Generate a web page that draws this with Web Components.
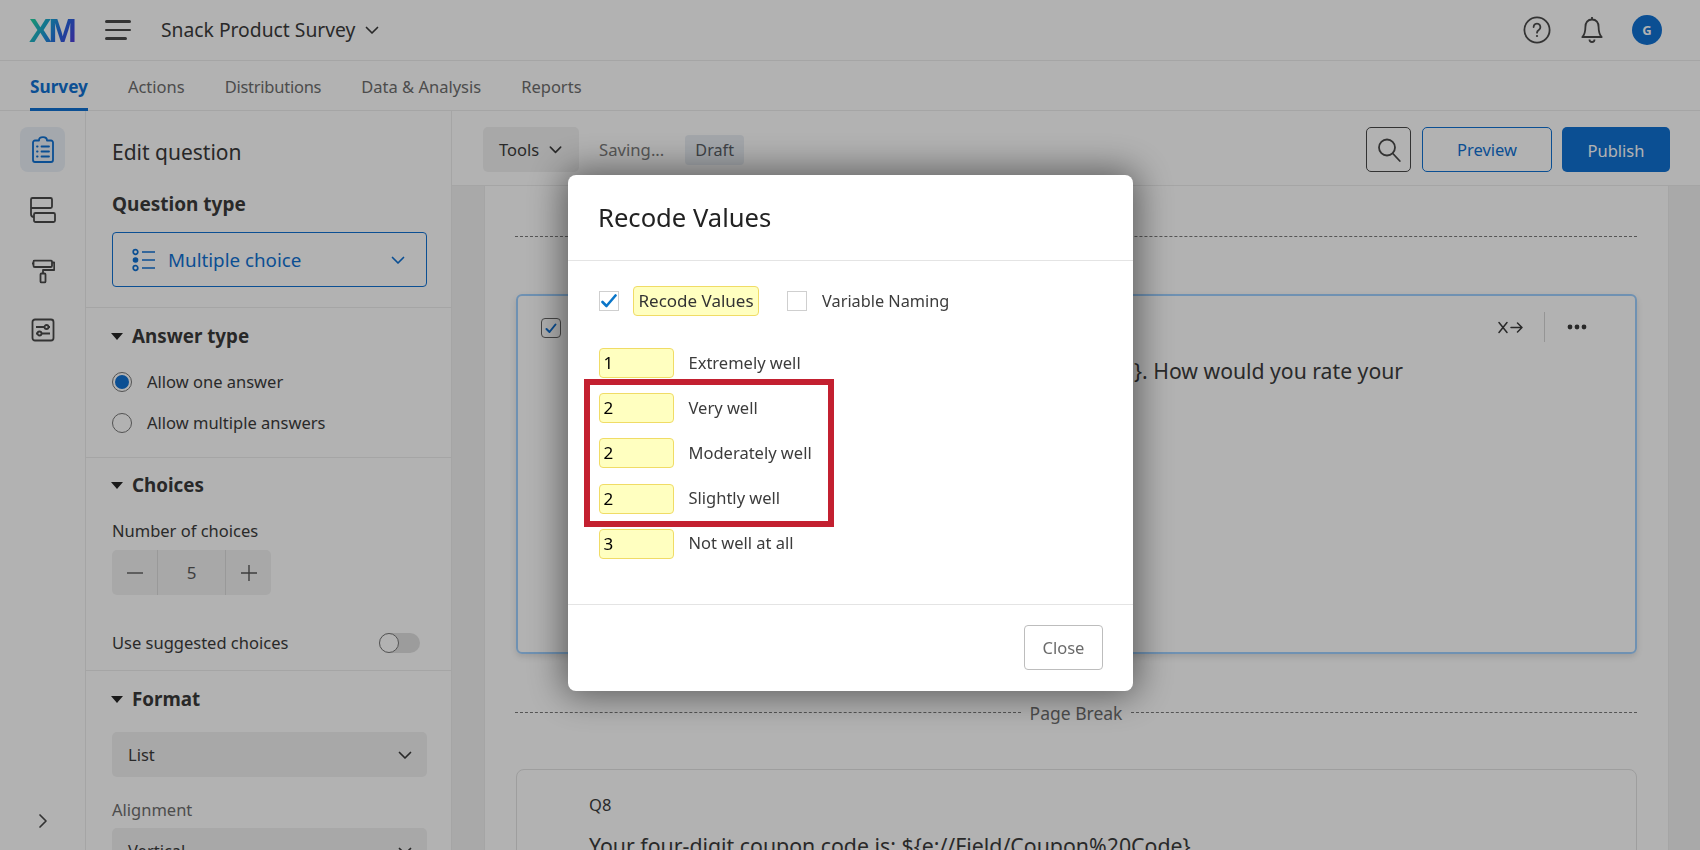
<!DOCTYPE html>
<html lang="en"><head><meta charset="utf-8"><title>Recode Values</title>
<style>
html,body{margin:0;height:850px;overflow:hidden;background:#fff}
body{font-family:"Noto Sans","Open Sans",sans-serif;color:#3c3c3c;font-size:16.5px}
app-shell{width:1700px;height:850px}
</style></head><body>
<app-shell>
  <qx-topbar slot="top" title="Snack Product Survey"></qx-topbar>
  <qx-tabs slot="tabs"></qx-tabs>
  <qx-rail slot="rail"></qx-rail>
  <qx-panel slot="panel"></qx-panel>
  <qx-toolbar slot="toolbar"></qx-toolbar>
  <qx-canvas slot="canvas"></qx-canvas>
</app-shell>
<qx-scrim></qx-scrim>
<qx-modal>
  <recode-row value="1">Extremely well</recode-row>
  <recode-row value="2">Very well</recode-row>
  <recode-row value="2">Moderately well</recode-row>
  <recode-row value="2">Slightly well</recode-row>
  <recode-row value="3">Not well at all</recode-row>
</qx-modal>
<script>
const def=(name,html,init)=>customElements.define(name,class extends HTMLElement{
  constructor(){super();this.attachShadow({mode:'open'}).innerHTML=typeof html==='function'?html(this):html;}
  connectedCallback(){ if(init) init(this,this.shadowRoot); }
});
const chev=(s=16,c='currentColor',w=1.7)=>`<svg width="${s}" height="${s}" viewBox="0 0 16 16" fill="none" stroke="${c}" stroke-width="${w}" stroke-linecap="round" stroke-linejoin="round"><path d="M2.5 5.5 8 11l5.5-5.5"/></svg>`;
const BLUE='#1071d3', INK='#3c3c3c', LINE='#ededed', FIELD='#f1f1f1';

def('app-shell',`<style>
:host{display:grid;grid-template-columns:86px 366px 1fr;grid-template-rows:61px 50px 75px 1fr;overflow:hidden}
::slotted([slot=top]),::slotted([slot=tabs]){grid-column:1/4}
::slotted([slot=rail]){grid-row:3/5;grid-column:1}
::slotted([slot=panel]){grid-row:3/5;grid-column:2}
::slotted([slot=toolbar]){grid-row:3;grid-column:3}
::slotted([slot=canvas]){grid-row:4;grid-column:3;min-height:0}
</style>
<slot name="top"></slot><slot name="tabs"></slot><slot name="rail"></slot><slot name="panel"></slot><slot name="toolbar"></slot><slot name="canvas"></slot>`);

def('qx-topbar',el=>`<style>
:host{display:flex;align-items:center;border-bottom:1px solid ${LINE};box-sizing:border-box;padding:0 38px 0 29px;color:${INK}}
.logo{font:700 34px/1 "Liberation Sans",sans-serif;letter-spacing:-3.2px;width:50px;height:30px;line-height:30px;background:linear-gradient(120deg,#24d8a0 5%,#1c9ad8 40%,#2a62e0 65%,#6030d8 100%);-webkit-background-clip:text;background-clip:text;color:transparent}
.burger{margin-left:26px;width:26px;display:flex;flex-direction:column;gap:6px}
.burger i{display:block;height:2.5px;background:#4a4a4a;border-radius:2px}
.burger i:last-child{width:22px}
.t{margin-left:30px;font-size:19.3px;color:${INK};padding-bottom:2px}
.c{margin-left:9px;display:flex}
.sp{flex:1}
.help{display:flex;margin-right:29px}.bell{display:flex;margin-right:28px}
.av{width:30px;height:30px;border-radius:50%;background:${BLUE};color:#fff;font:700 13px/30px "Noto Sans",sans-serif;text-align:center}
</style>
<div class="logo">XM</div>
<div class="burger"><i></i><i></i><i></i></div>
<div class="t">${el.getAttribute('title')}</div><div class="c">${chev(16,INK)}</div>
<div class="sp"></div>
<div class="help"><svg width="28" height="28" viewBox="0 0 28 28" fill="none" stroke="#4a4a4a" stroke-width="1.8"><circle cx="14" cy="14" r="12.6"/><path d="M10.6 11a3.4 3.4 0 1 1 5.2 2.9c-1.2.8-1.8 1.4-1.8 2.8" stroke-linecap="round"/><circle cx="14" cy="20" r="1.1" fill="#4a4a4a" stroke="none"/></svg></div>
<div class="bell"><svg width="24" height="28" viewBox="0 0 24 28" fill="none" stroke="#4a4a4a" stroke-width="1.8" stroke-linejoin="round"><path d="M12 3.5c-4.4 0-6.6 3.2-6.6 7.4 0 5.5-1.2 8-3.1 10.1h19.4c-1.9-2.1-3.1-4.6-3.1-10.1 0-4.2-2.2-7.4-6.6-7.4Z"/><path d="M12 1v2.5M9.5 23.5a2.5 2.5 0 0 0 5 0"/></svg></div>
<div class="av">G</div>`);

def('qx-tabs',`<style>
:host{display:flex;border-bottom:1px solid ${LINE};box-sizing:border-box;padding-left:30px;font-size:16.5px;color:#6e6e6e}
a{display:block;line-height:52px;height:49px;margin-right:40px;box-sizing:border-box}
a.on{color:${BLUE};font-weight:700;font-size:17.200px;border-bottom:3px solid ${BLUE};height:50px;margin-bottom:-1px}
.d{letter-spacing:-.25px}
</style><a class="on">Survey</a><a>Actions</a><a class="d">Distributions</a><a>Data &amp; Analysis</a><a>Reports</a>`);

def('qx-rail',`<style>
:host{display:flex;flex-direction:column;align-items:center;border-right:1px solid ${LINE};box-sizing:border-box;padding-top:16px;position:relative}
.b{width:45px;height:45px;border-radius:8px;display:flex;align-items:center;justify-content:center;margin-bottom:15px;color:#4a4a4a}
.on{background:#ebf1f8;color:${BLUE}}
.x{margin-top:auto;margin-bottom:21px;display:flex;color:#4a4a4a}
</style>
<div class="b on"><svg width="24" height="28" viewBox="0 0 24 28" fill="none" stroke="currentColor" stroke-width="1.8" stroke-linejoin="round" stroke-linecap="round"><path d="M8 4.5H4a2 2 0 0 0-2 2V24a2 2 0 0 0 2 2h16a2 2 0 0 0 2-2V6.500a2 2 0 0 0-2-2h-4c0-2-1.800-3.300-4-3.300S8 2.500 8 4.500Z"/><path d="M10.500 10.500H18M10.500 15.500H18M10.500 20.500H18M6 10.500h.6M6 15.500h.6M6 20.500h.6"/></svg></div>
<div class="b"><svg width="26" height="28" viewBox="0 0 26 28" fill="none" stroke="currentColor" stroke-width="1.800" stroke-linejoin="round"><path d="M1 3.500A1.500 1.500 0 0 1 2.500 2H20.500A1.500 1.500 0 0 1 22 3.500V10.500A1.500 1.500 0 0 1 20.500 12H1M1 3.500V18c0 1.800 1 3 3 3"/><rect x="4" y="17" width="21" height="9" rx="1.500"/></svg></div>
<div class="b"><svg width="24" height="24" viewBox="0 0 24 24" fill="none" stroke="currentColor" stroke-width="1.800" stroke-linejoin="round" style="transform:translateY(1.500px)"><rect x="2.500" y="1" width="18.500" height="6.500" rx="1.300"/><path d="M2.500 4H1M21 3h2.200v7.500H12V14"/><rect x="9.500" y="14" width="5" height="9" rx="1"/></svg></div>
<div class="b"><svg width="24" height="24" viewBox="0 0 24 24" fill="none" stroke="currentColor" stroke-width="1.8"><rect x="1.500" y="1.500" width="21" height="21" rx="2.500"/><path d="M5 9h8.500M17.500 9H19M5 15.500h1.500M10.500 15.500H19"/><circle cx="15.500" cy="9" r="2"/><circle cx="8.500" cy="15.500" r="2"/></svg></div>
<div class="x"><svg width="14" height="16" viewBox="0 0 14 16" fill="none" stroke="currentColor" stroke-width="1.700" stroke-linecap="round" stroke-linejoin="round"><path d="M4 2l6 6-6 6"/></svg></div>`);

const tri=`<svg width="12" height="7" viewBox="0 0 12 7"><path d="M0 0h12L6 7Z" fill="#262626"/></svg>`;
def('qx-panel',`<style>
:host{display:block;border-right:1px solid ${LINE};box-sizing:border-box;overflow:hidden;color:${INK}}
section{padding:0 24px 0 26px;border-bottom:1px solid ${LINE}}
section:last-child{border:0}
h1{margin:0;font-weight:400;font-size:21px;line-height:28px;color:#3a3a3a}
h2{margin:0;font-weight:700;font-size:18.800px;line-height:24px;display:flex;align-items:center;gap:9px;margin-left:-1px;color:#3a3a3a}
.qt{margin-top:26px;font-weight:700;font-size:19px;line-height:24px}
.sel{margin-top:16px;height:55px;border:1.500px solid ${BLUE};border-radius:4px;box-sizing:border-box;display:flex;align-items:center;padding:0 20px 0 19px;color:${BLUE};font-size:18.800px}
.sel span{margin-left:12px;flex:1}
.r{height:41px;display:flex;align-items:center;gap:15px;font-size:16.500px}
.dot{width:20px;height:20px;border-radius:50%;border:1px solid #777;box-sizing:border-box;background:#fff;display:flex;align-items:center;justify-content:center}
.dot i{width:14px;height:14px;border-radius:50%;background:${BLUE}}
.lab{font-size:16.500px;line-height:22px}
.st{display:flex;width:159px;height:45px;background:${FIELD};border-radius:5px;margin-top:8px;align-items:center;color:#5a5a5a}
.st div{display:flex;align-items:center;justify-content:center;height:100%}
.st .n{width:69px;border-left:1.500px solid #dcdcdc;border-right:1.500px solid #dcdcdc;box-sizing:border-box;font-size:17px}
.st .m{width:45px}.st .p{width:45px}
.row{display:flex;justify-content:space-between;align-items:center;margin-top:37px;height:22px}
.tg{width:41px;height:20px;border-radius:10px;background:#e0e0e0;position:relative;margin-right:7px}
.tg i{position:absolute;left:0;top:0;width:20px;height:20px;border-radius:50%;background:#fff;border:1px solid #777;box-sizing:border-box}
.f{height:45px;background:${FIELD};border-radius:5px;display:flex;align-items:center;justify-content:space-between;padding:0 14px 0 16px;font-size:16.500px}
</style>
<section style="padding-top:27px;height:197px;box-sizing:border-box">
  <h1>Edit question</h1>
  <div class="qt">Question type</div>
  <div class="sel"><svg width="24" height="24" viewBox="0 0 24 24" fill="none" stroke="currentColor" stroke-width="1.700"><circle cx="3.500" cy="4" r="2.300"/><circle cx="3.500" cy="12" r="2.800" fill="currentColor" stroke="none"/><circle cx="3.500" cy="20" r="2.300"/><path d="M10 4h13M10 12h13M10 20h13"/></svg><span>Multiple choice</span>${chev(16,BLUE)}</div>
</section>
<section style="padding-top:16px;height:150px;box-sizing:border-box">
  <h2>${tri}Answer type</h2>
  <div class="r" style="margin-top:13px"><div class="dot"><i></i></div>Allow one answer</div>
  <div class="r"><div class="dot"></div>Allow multiple answers</div>
</section>
<section style="padding-top:15px;height:213px;box-sizing:border-box">
  <h2>${tri}Choices</h2>
  <div class="lab" style="margin-top:23px">Number of choices</div>
  <div class="st"><div class="m"><svg width="16" height="2" viewBox="0 0 16 2"><path d="M0 1h16" stroke="#5a5a5a" stroke-width="1.400"/></svg></div><div class="n">5</div><div class="p"><svg width="16" height="16" viewBox="0 0 16 16"><path d="M0 8h16M8 0v16" stroke="#5a5a5a" stroke-width="1.400"/></svg></div></div>
  <div class="row lab"><span>Use suggested choices</span><div class="tg"><i></i></div></div>
</section>
<section style="padding-top:16px">
  <h2>${tri}Format</h2>
  <div class="f" style="margin-top:21px">List${chev(16,INK)}</div>
  <div class="lab" style="margin-top:22px;color:#6e6e6e">Alignment</div>
  <div class="f" style="margin-top:7px">Vertical${chev(16,INK)}</div>
</section>`);

def('qx-toolbar',`<style>
:host{display:flex;align-items:flex-start;border-bottom:1px solid ${LINE};box-sizing:border-box;padding:16px 30px 0 31px;font-size:16.500px}
.tools{height:45px;width:96px;background:${FIELD};border-radius:5px;display:flex;align-items:center;justify-content:center;gap:9px;color:${INK}}
.sv{margin-left:20px;line-height:45px;color:#7c7c7c;font-size:16.700px}
.dr{margin-left:21px;margin-top:8px;height:30px;line-height:30px;padding:0 10px;background:#e9eef4;border-radius:4px;color:#5a5f66;font-size:16.200px}
.sp{flex:1}
.s{width:45px;height:45px;border:1.500px solid #4a4a4a;border-radius:5px;box-sizing:border-box;display:flex;align-items:center;justify-content:center}
.pv{margin-left:11px;width:130px;height:45px;border:1.500px solid ${BLUE};border-radius:5px;box-sizing:border-box;color:${BLUE};display:flex;align-items:center;justify-content:center}
.pb{margin-left:10px;width:108px;height:45px;background:${BLUE};border-radius:5px;color:#fff;display:flex;align-items:center;justify-content:center;padding-top:2px;box-sizing:border-box}
</style>
<div class="tools">Tools${chev(15,INK)}</div><div class="sv">Saving...</div><div class="dr">Draft</div><div class="sp"></div>
<div class="s"><svg width="24" height="26" viewBox="0 0 24 26" fill="none" stroke="#4a4a4a" stroke-width="1.800" stroke-linecap="round"><circle cx="10" cy="10.500" r="8"/><path d="m15.800 16.500 7 7.500"/></svg></div>
<div class="pv">Preview</div><div class="pb">Publish</div>`);

def('page-break',el=>`<style>
:host{display:flex;align-items:center;gap:9px;height:1px;font-size:17.500px;color:#6e6e6e}
i{flex:1;border-top:1.200px dashed #7a7a7a}
</style><i></i>${el.hasAttribute('label')?`<span>${el.getAttribute('label')}</span><i></i>`:''}`);

def('qx-canvas',`<style>
:host{display:block;background:#f2f2f2;padding:0 31px 0 32px;overflow:hidden}
.col{background:#fff;border:solid ${LINE};border-width:0 1px;height:100%;padding:50px 31px 0 30px;box-sizing:content-box;overflow:hidden}
.card{margin:57px 0 0 1px;height:360px;box-sizing:border-box;border:2px solid #9fd0ff;border-radius:6px;box-shadow:0 3px 6px rgba(0,0,0,.12);padding:21px 48px 0 23px;font-size:21.200px}
.hd{display:flex;align-items:center;height:22px}
.ck{width:20px;height:20px;border:1.200px solid #666;border-radius:4px;box-sizing:border-box;display:flex;align-items:center;justify-content:center;background:#fff}
.sp{flex:1}
.ic{display:flex;align-items:center;margin-top:-2px}
.sep{height:30px;width:1px;background:#d6d6d6;margin:0 22px 0 20px}
.q{margin:18px 0 0 593px;line-height:28px;white-space:nowrap;color:#3c3c3c}
.c2{margin:56px 0 0 1px;height:200px;box-sizing:border-box;border:1px solid #e2e2e2;border-radius:8px;padding:23px 0 0 72px}
.c2 .n{font-size:16.500px;line-height:24px;color:#3c3c3c}
.c2 .t{font-size:21.300px;line-height:28px;margin-top:15px;color:#3c3c3c;white-space:nowrap}
</style>
<div class="col">
  <page-break></page-break>
  <div class="card">
    <div class="hd"><div class="ck"><svg width="12" height="11" viewBox="0 0 12 11" fill="none" stroke="${BLUE}" stroke-width="2" stroke-linecap="round" stroke-linejoin="round"><path d="M1.500 6 4.500 9 10.500 1.500"/></svg></div><div class="sp"></div>
      <div class="ic"><svg width="26" height="14" viewBox="0 0 26 14" fill="none" stroke="#3c3c3c" stroke-width="1.500" stroke-linecap="round" stroke-linejoin="round"><path d="M1 2.500 9 12.500M9 2.500 1 12.500M13 7.500h11M19.500 3l4.500 4.500-4.500 4.500"/></svg>
      <div class="sep"></div>
      <svg width="20" height="6" viewBox="0 0 20 6" fill="#3c3c3c"><circle cx="3" cy="3" r="2.400"/><circle cx="10" cy="3" r="2.400"/><circle cx="17" cy="3" r="2.400"/></svg></div></div>
    <div class="q">}. How would you rate your</div>
  </div>
  <div style="height:58px"></div>
  <page-break label="Page Break"></page-break>
  <div class="c2"><div class="n">Q8</div><div class="t">Your four-digit coupon code is: \${e://Field/Coupon%20Code}</div></div>
</div>`);

def('qx-scrim',`<style>:host{position:fixed;inset:0;background:rgba(0,0,0,.3);display:block}</style>`);

def('recode-row',el=>`<style>
:host{display:flex;align-items:center;height:30px;font-size:16.500px;color:#3c3c3c}
.i{width:75px;height:30px;box-sizing:border-box;background:#ffffc0;border:1.500px solid #f0dc66;border-radius:4px;color:#000;line-height:27px;padding-left:4px;font-size:17px;margin-right:15px}
.l{padding-bottom:2px}
</style><div class="i">${el.getAttribute('value')}</div><div class="l"><slot></slot></div>`);

def('qx-modal',`<style>
:host{position:fixed;left:568px;top:175px;width:565px;height:516px;background:#fff;border-radius:8px;box-shadow:0 0 36px 4px rgba(0,0,0,.5);display:flex;flex-direction:column;color:#303030}
header{height:86px;box-sizing:border-box;border-bottom:1px solid #e4e4e4;padding:0 30px;display:flex;align-items:center;font-size:25.600px;color:#222}
main{flex:1;padding:25px 30px 0 30.500px}
.top{display:flex;align-items:center;height:30px;font-size:16.500px}
.cb{width:20px;height:20px;border:1.500px solid #cfcfcf;box-sizing:border-box;background:#fff;display:flex;align-items:center;justify-content:center}
.hl{margin-left:14.500px;height:30px;line-height:27px;box-sizing:border-box;padding:0 4.500px;background:#ffffc0;border:1.500px solid #f0dc66;border-radius:4px;color:#333;font-size:17px}
.vn{margin-left:15px;color:#3c3c3c;font-size:16.300px}
.rows{margin-top:32px;display:flex;flex-direction:column;gap:15.200px}
footer{height:87px;box-sizing:border-box;border-top:1px solid #e4e4e4;display:flex;justify-content:flex-end;align-items:flex-start;padding:20px 30px 0 0}
button{all:unset;width:79px;height:45px;box-sizing:border-box;border:1.500px solid #bdbdbd;border-radius:4px;text-align:center;line-height:42px;color:#6b6b6b;font:16.500px/42px "Noto Sans",sans-serif}
.red{position:absolute;left:16px;top:204px;width:250px;height:148px;box-sizing:border-box;border:6px solid #c32030}
</style>
<header>Recode Values</header>
<main>
  <div class="top">
    <div class="cb"><svg width="16" height="14" viewBox="0 0 16 14" fill="none" stroke="#0a76c9" stroke-width="2.600" stroke-linecap="round" stroke-linejoin="round"><path d="M1.500 8 5.500 12 14.500 1.500"/></svg></div>
    <div class="hl">Recode Values</div>
    <div class="cb" style="margin-left:28px"></div>
    <div class="vn">Variable Naming</div>
  </div>
  <div class="rows"><slot></slot></div>
</main>
<footer><button>Close</button></footer>
<div class="red"></div>`);
</script>
</body></html>
